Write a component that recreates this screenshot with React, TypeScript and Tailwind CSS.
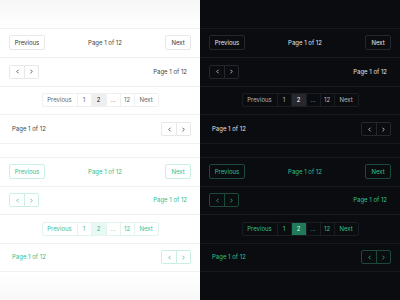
import React from 'react';

type Theme = {
  bg: string;
  line: string;
  btn: string;
  text: string;
  muted: string;
  active: string;
  sep: string;
};

const themes: Record<string, Theme> = {
  light: {
    bg: 'bg-white',
    line: 'border-[#f1f1f1]',
    btn: 'border-[#e8e8e8] text-[#333]',
    text: 'text-[#444]',
    muted: 'text-[#666]',
    active: 'bg-[#efefef] text-[#222]',
    sep: 'border-[#f0f0f0]',
  },
  dark: {
    bg: 'bg-[#0a0c10]',
    line: 'border-[#16191e]',
    btn: 'border-[#24282e] text-[#e8e8e8]',
    text: 'text-[#e2e2e2]',
    muted: 'text-[#b5b9be]',
    active: 'bg-[#26292e] text-white',
    sep: 'border-[#1a1d22]',
  },
  lightGreen: {
    bg: 'bg-white',
    line: 'border-[#f1f1f1]',
    btn: 'border-[#c9f0e2] text-[#33bd8b]',
    text: 'text-[#33bd8b]',
    muted: 'text-[#3cc193]',
    active: 'bg-[#e8f8f2] text-[#33bd8b]',
    sep: 'border-[#e2f6ee]',
  },
  darkGreen: {
    bg: 'bg-[#0a0c10]',
    line: 'border-[#16191e]',
    btn: 'border-[#1b4a39] text-[#32c18d]',
    text: 'text-[#32c18d]',
    muted: 'text-[#32c18d]',
    active: 'bg-[#1f7a5a] text-[#d6f5ea]',
    sep: 'border-[#1a1d22]',
  },
};

const Chevron = ({ dir }: { dir: 'l' | 'r' }) => (
  <svg width="5" height="5" viewBox="0 0 10 10" fill="none">
    <path
      d={dir === 'l' ? 'M6.5 2 L3.5 5 L6.5 8' : 'M3.5 2 L6.5 5 L3.5 8'}
      stroke="currentColor"
      strokeWidth="1.5"
      strokeLinecap="round"
      strokeLinejoin="round"
    />
  </svg>
);

const Arrows = ({ t }: { t: Theme }) => (
  <div className={`flex h-[14px] rounded-[2px] border ${t.btn}`}>
    <div className="flex w-[14px] items-center justify-center">
      <Chevron dir="l" />
    </div>
    <div className={`flex w-[14px] items-center justify-center border-l ${t.btn}`}>
      <Chevron dir="r" />
    </div>
  </div>
);

const Rows = ({ t, h }: { t: Theme; h: string }) => {
  const row = `flex items-center px-[9px] border-b ${t.line} ${h}`;
  return (
    <div className={`border-t ${t.line}`}>
      <div className={`${row} justify-between`}>
        <div className={`flex h-[15px] w-[36px] items-center justify-center rounded-[2px] border ${t.btn}`}>Previous</div>
        <span className={t.text}>Page 1 of 12</span>
        <div className={`flex h-[15px] w-[26px] items-center justify-center rounded-[2px] border ${t.btn}`}>Next</div>
      </div>
      <div className={`${row} justify-between`}>
        <Arrows t={t} />
        <span className={`${t.text} pr-[4px]`}>Page 1 of 12</span>
      </div>
      <div className={`${row} justify-center`}>
        <div className={`flex h-[14px] rounded-[2px] border ${t.sep} ${t.muted}`}>
          <div className="flex w-[34px] items-center justify-center">Previous</div>
          <div className={`flex w-[14px] items-center justify-center border-l ${t.sep}`}>1</div>
          <div className={`flex w-[15px] items-center justify-center border-l ${t.sep} ${t.active}`}>2</div>
          <div className={`flex w-[14px] items-center justify-center border-l ${t.sep}`}>...</div>
          <div className={`flex w-[14px] items-center justify-center border-l ${t.sep}`}>12</div>
          <div className={`flex w-[24px] items-center justify-center border-l ${t.sep}`}>Next</div>
        </div>
      </div>
      <div className={`${row} justify-between`}>
        <span className={`${t.text} pl-[3px]`}>Page 1 of 12</span>
        <Arrows t={t} />
      </div>
    </div>
  );
};

const Column = ({ top, bottom, light }: { top: Theme; bottom: Theme; light: boolean }) => (
  <div className={`flex h-[300px] w-[200px] flex-col ${top.bg}`}>
    <div className={`h-[28px] ${light ? 'bg-gradient-to-b from-[#f7f7f7] to-white' : ''}`} />
    <Rows t={top} h="h-[28.75px]" />
    <div className="h-[13px]" />
    <Rows t={bottom} h="h-[28.5px]" />
    <div className={`flex-1 ${light ? 'bg-gradient-to-b from-white to-[#f8f8f8]' : ''}`} />
  </div>
);

export default function App() {
  return (
    <div
      className="flex h-[300px] w-[400px] overflow-hidden text-[6px] leading-none"
      style={{ fontFamily: 'Inter, "Noto Sans", sans-serif' }}
    >
      <Column top={themes.light} bottom={themes.lightGreen} light />
      <Column top={themes.dark} bottom={themes.darkGreen} light={false} />
    </div>
  );
}
